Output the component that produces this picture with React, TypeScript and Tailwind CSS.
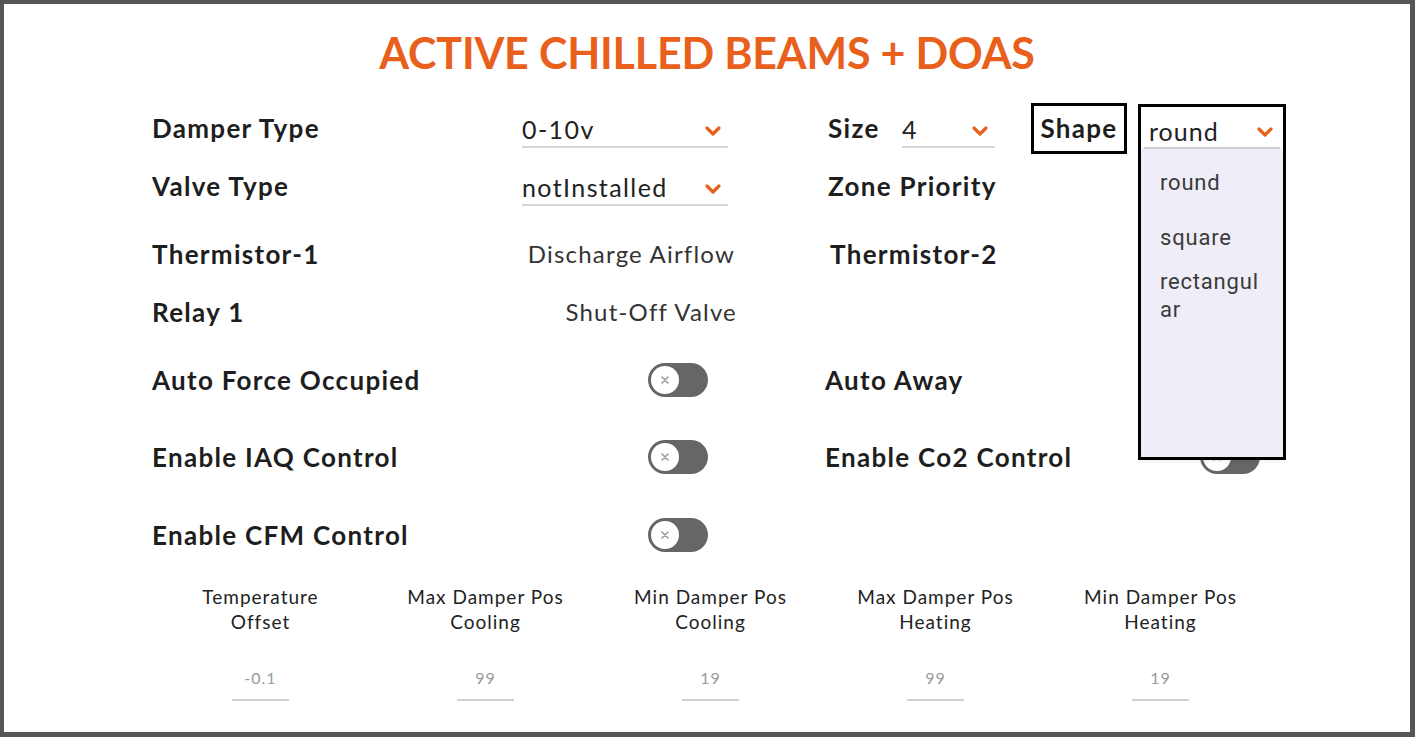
import React from "react";

const lato = "font-['Lato','Liberation_Sans',sans-serif]";

// Orange chevron used by the selects
function Chevron({ className = "" }: { className?: string }) {
  return (
    <svg width="18" height="12" viewBox="0 0 18 12" className={className}>
      <polyline
        points="3,3 9,9 15,3"
        fill="none"
        stroke="#e8601c"
        strokeWidth="3.2"
        strokeLinecap="round"
        strokeLinejoin="round"
      />
    </svg>
  );
}

function Select({ value, width }: { value: string; width: string }) {
  return (
    <div className={`mt-[5px] flex items-end justify-between border-b-2 border-[#d6d6d6] pb-[2px] ${width}`}>
      <span className={`${lato} text-[25px] leading-[30px] tracking-[1.4px] text-[#222]`}>{value}</span>
      <Chevron className="mb-[7px] mr-[6px]" />
    </div>
  );
}

function Toggle() {
  return (
    <div className="flex h-[34px] w-[60px] items-center rounded-full bg-[#666] pl-[3px]">
      <div className="flex h-[28px] w-[28px] items-center justify-center rounded-full bg-white">
        <svg width="10" height="10" viewBox="0 0 10 10">
          <path d="M2 2 L8 8 M8 2 L2 8" stroke="#999" strokeWidth="1.6" strokeLinecap="round" />
        </svg>
      </div>
    </div>
  );
}

function Label({ children, className = "" }: { children: React.ReactNode; className?: string }) {
  return (
    <span className={`${lato} text-[26px] font-bold leading-[30px] tracking-[1.3px] text-[#1e1e1e] ${className}`}>
      {children}
    </span>
  );
}

const fields = [
  { top: "Temperature", bottom: "Offset", value: "-0.1" },
  { top: "Max Damper Pos", bottom: "Cooling", value: "99" },
  { top: "Min Damper Pos", bottom: "Cooling", value: "19" },
  { top: "Max Damper Pos", bottom: "Heating", value: "99" },
  { top: "Min Damper Pos", bottom: "Heating", value: "19" },
];

export default function App() {
  return (
    <div className="h-[737px] w-[1415px] overflow-hidden bg-[#555] pl-[4px] pt-[4px] pr-[5px] pb-[5px]">
      <div className="relative flex h-full w-full flex-col bg-white">
        {/* Title */}
        <h1
          className={`${lato} mt-[24px] text-center text-[43px] font-bold leading-[50px] tracking-[-0.2px] text-[#e8601c]`}
        >
          ACTIVE CHILLED BEAMS + DOAS
        </h1>

        {/* Row 1 */}
        <div className="mt-[25px] flex h-[50px] items-center pl-[148px]">
          <Label className="w-[370px]">Damper Type</Label>
          <Select value="0-10v" width="w-[206px]" />
          <div className="w-[100px]" />
          <Label className="w-[74px]">Size</Label>
          <Select value="4" width="w-[93px]" />
          <div className="w-[36px]" />
          <div className="flex h-[51px] w-[96px] items-center justify-center border-[3px] border-black">
            <Label className="tracking-[0.4px]">Shape</Label>
          </div>
        </div>

        {/* Row 2 */}
        <div className="mt-[8px] flex h-[50px] items-center pl-[148px]">
          <Label className="w-[370px]">Valve Type</Label>
          <Select value="notInstalled" width="w-[206px]" />
          <div className="w-[100px]" />
          <Label>Zone Priority</Label>
        </div>

        {/* Row 3 */}
        <div className="mt-[18px] flex h-[50px] items-center pl-[148px]">
          <Label className="w-[370px]">Thermistor-1</Label>
          <span className={`${lato} w-[213px] text-right text-[24px] tracking-[1.2px] text-[#333]`}>
            Discharge Airflow
          </span>
          <div className="w-[95px]" />
          <Label>Thermistor-2</Label>
        </div>

        {/* Row 4 */}
        <div className="mt-[8px] flex h-[50px] items-center pl-[148px]">
          <Label className="w-[370px]">Relay 1</Label>
          <span className={`${lato} w-[215px] text-right text-[24px] tracking-[1.2px] text-[#333]`}>
            Shut-Off Valve
          </span>
        </div>

        {/* Row 5 */}
        <div className="mt-[18px] flex h-[50px] items-center pl-[148px]">
          <Label className="w-[496px]">Auto Force Occupied</Label>
          <Toggle />
          <div className="w-[117px]" />
          <Label>Auto Away</Label>
        </div>

        {/* Row 6 */}
        <div className="mt-[27px] flex h-[50px] items-center pl-[148px]">
          <Label className="w-[496px]">Enable IAQ Control</Label>
          <Toggle />
          <div className="w-[117px]" />
          <Label className="w-[375px]">Enable Co2 Control</Label>
          <Toggle />
        </div>

        {/* Row 7 */}
        <div className="mt-[28px] flex h-[50px] items-center pl-[148px]">
          <Label className="w-[496px]">Enable CFM Control</Label>
          <Toggle />
        </div>

        {/* Numeric fields */}
        <div className="mt-[24px] flex pl-[144px]">
          {fields.map((f, i) => (
            <div key={i} className="flex w-[225px] flex-col items-center">
              <span className={`${lato} text-center text-[19px] leading-[25px] tracking-[1px] text-[#222]`}>
                {f.top}
                <br />
                {f.bottom}
              </span>
              <span className={`${lato} mt-[34px] text-[16px] leading-[20px] tracking-[1px] text-[#9a9a9a]`}>
                {f.value}
              </span>
              <div className="mt-[11px] h-[2px] w-[57px] bg-[#d0d0d0]" />
            </div>
          ))}
        </div>

        {/* Open shape dropdown */}
        <div className="absolute left-[1134px] top-[100px] z-10 flex h-[356px] w-[148px] flex-col border-[3px] border-black bg-white">
          <div className="mx-[3px] flex h-[42px] items-end justify-between border-b-2 border-[#d6d6d6] pb-[1px] pl-[5px]">
            <span className={`${lato} text-[25px] leading-[30px] tracking-[1px] text-[#222]`}>round</span>
            <Chevron className="mb-[8px] mr-[6px]" />
          </div>
          <div className="mr-[1px] flex flex-1 flex-col bg-[#efedf7] pl-[19px] pt-[20px] shadow-[0_2px_6px_rgba(0,0,0,0.15)] font-['Roboto','Liberation_Sans',sans-serif] text-[22px] leading-[28px] tracking-[0.8px] text-[#3a3a3a]">
            <span>round</span>
            <span className="mt-[27px]">square</span>
            <span className="mt-[16px] w-[108px] break-all">rectangular</span>
          </div>
        </div>
      </div>
    </div>
  );
}
